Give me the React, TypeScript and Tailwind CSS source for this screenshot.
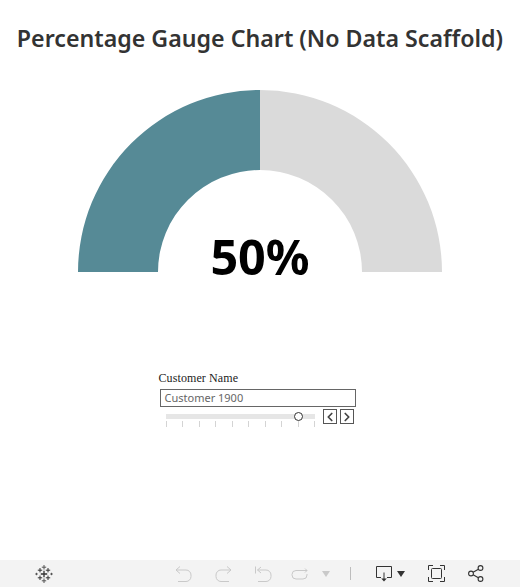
import { ChevronLeft, ChevronRight } from 'lucide-react';

function Gauge() {
  return (
    <svg width="364" height="182" viewBox="0 0 364 182" className="block">
      <path d="M0 182A182 182 0 0 1 182 0V80A102 102 0 0 0 80 182Z" fill="#568a96" />
      <path d="M182 0A182 182 0 0 1 364 182H284A102 102 0 0 0 182 80Z" fill="#dadada" />
    </svg>
  );
}

function TableauLogo() {
  return (
    <svg width="18" height="18" viewBox="0 0 18 18" fill="none" stroke="#333" strokeWidth="1">
      <path d="M9 0v4.500M6.800 2.200h4.400" stroke="#555" />
      <path d="M9 5.800v6.400M5.800 9h6.400" strokeWidth="1.300" />
      <path d="M9 13.500V18M6.800 15.800h4.400" stroke="#555" />
      <path d="M5 3v4.400M2.800 5.200h4.400M13 3v4.400M10.800 5.200h4.400M5 10.600V15M2.800 12.800h4.400M13 10.600V15M10.800 12.800h4.400" />
      <path d="M1.500 7.800v2.400M.2 9h2.600M16.500 7.800v2.400M15.200 9h2.600" stroke="#555" />
    </svg>
  );
}

function Undo() {
  return (
    <svg width="17" height="18" viewBox="0 0 17 18" fill="none" stroke="#c9c9c9" strokeWidth="1">
      <path d="M5 1.500 1 5l4 3.500M1 5h10a5 5 0 0 1 5 5v1.500a5 5 0 0 1-5 5H3" />
    </svg>
  );
}

function Redo() {
  return (
    <svg width="17" height="18" viewBox="0 0 17 18" fill="none" stroke="#c9c9c9" strokeWidth="1">
      <path d="M12 1.500 16 5l-4 3.500M16 5H6a5 5 0 0 0-5 5v1.500a5 5 0 0 0 5 5h8" />
    </svg>
  );
}

function Revert() {
  return (
    <svg width="17" height="18" viewBox="0 0 17 18" fill="none" stroke="#c9c9c9" strokeWidth="1">
      <path d="M.5 1.500v7M6 2 2.500 5 6 8M2.500 5H11a5 5 0 0 1 5 5v1.500a5 5 0 0 1-5 5H3" />
    </svg>
  );
}

function Refresh() {
  return (
    <svg width="17" height="12" viewBox="0 0 17 12" fill="none" stroke="#c9c9c9" strokeWidth="1">
      <path d="M14 .5 16 2.500 14 4.500M16 2.500H5a4 4 0 0 0-4 4v.5a4 4 0 0 0 4 4h7a4 4 0 0 0 4-4V6" />
    </svg>
  );
}

function Download() {
  return (
    <svg width="16" height="16" viewBox="0 0 16 16" fill="none" stroke="#333" strokeWidth="1">
      <path d="M5 11.500H.5V.5h15v11H11M8 6.500v7" />
      <path d="M5.200 12.500h5.600L8 15.500Z" fill="#333" stroke="none" />
    </svg>
  );
}

function Fullscreen() {
  return (
    <svg width="17" height="17" viewBox="0 0 17 17" fill="none" stroke="#333" strokeWidth="1">
      <path d="M5 .5H.5V5M12 .5h4.500V5M5 16.500H.5V12M12 16.500h4.500V12" />
      <rect x="3.500" y="3.500" width="10" height="10" rx="1" />
    </svg>
  );
}

function Share() {
  return (
    <svg width="16" height="17" viewBox="0 0 16 17" fill="none" stroke="#333" strokeWidth="1.100">
      <circle cx="3" cy="8.500" r="2.400" />
      <circle cx="12.500" cy="3" r="2.400" />
      <circle cx="12.500" cy="14" r="2.400" />
      <path d="M5.100 7.300 10.400 4.200M5.100 9.700l5.300 3.100" />
    </svg>
  );
}

function Caret({ dark }: { dark?: boolean }) {
  return (
    <div
      className={`h-0 w-0 border-x-4 border-t-[6px] border-x-transparent ${dark ? 'border-t-[#333]' : 'border-t-[#c9c9c9]'}`}
    />
  );
}

function SliderTicks() {
  return (
    <div className="mt-[2px] flex h-[6px] w-[150px] justify-between">
      {Array.from({ length: 10 }, (_, i) => (
        <div key={i} className="h-full w-px bg-[#d4d4d4]" />
      ))}
    </div>
  );
}

export default function App() {
  return (
    <div className="relative flex h-[587px] w-[520px] flex-col items-center overflow-hidden bg-white">
      <h1 className="mt-[21px] h-[34px] whitespace-nowrap text-center font-['Noto_Sans',sans-serif] text-[23.200px] font-semibold leading-[34px] text-[#333333]">
        Percentage Gauge Chart (No Data Scaffold)
      </h1>

      <div className="relative mt-[35px]">
        <Gauge />
        <div className="absolute bottom-[-18px] left-0 right-0 text-center font-['Noto_Sans',sans-serif] text-[48.500px] font-bold leading-[68px] text-black">
          50%
        </div>
      </div>

      <div className="ml-[-5px] mt-[99px] w-[198px]">
        <div className="h-[15px] font-['Liberation_Serif',serif] text-[12px] leading-[15px] tracking-[0.1px] text-[#222]">
          Customer Name
        </div>
        <div className="ml-px mt-[3px] h-[18px] w-[196px] border border-[#666] pl-[4px] font-['Noto_Sans',sans-serif] text-[11px] leading-[15px] text-[#666]">
          Customer 1900
        </div>
        <div className="ml-[7px] mt-[2px] flex">
          <div className="w-[149px] pt-[5px]">
            <div className="relative h-[5px] bg-[#e6e6e6]">
              <div className="absolute left-[128px] top-[-2px] h-[9px] w-[9px] rounded-full border border-[#333] bg-white" />
            </div>
            <SliderTicks />
          </div>
          <div className="ml-[8px] flex h-[15px] w-[14px] items-center justify-center border border-[#555]">
            <ChevronLeft size={14} strokeWidth={3} color="#444" className="shrink-0" />
          </div>
          <div className="ml-[3px] flex h-[15px] w-[14px] items-center justify-center border border-[#555]">
            <ChevronRight size={14} strokeWidth={3} color="#444" className="shrink-0" />
          </div>
        </div>
      </div>

      <div className="mt-auto flex h-[27px] w-full items-center bg-[#f3f3f3]">
        <div className="ml-[35px]"><TableauLogo /></div>
        <div className="ml-[122px]"><Undo /></div>
        <div className="ml-[23px]"><Redo /></div>
        <div className="ml-[23px]"><Revert /></div>
        <div className="ml-[19px]"><Refresh /></div>
        <div className="ml-[14px]"><Caret /></div>
        <div className="ml-[20px] h-[13px] w-px bg-[#bdbdbd]" />
        <div className="ml-[25px]"><Download /></div>
        <div className="ml-[5px]"><Caret dark /></div>
        <div className="ml-[23px]"><Fullscreen /></div>
        <div className="ml-[23px]"><Share /></div>
      </div>
    </div>
  );
}
